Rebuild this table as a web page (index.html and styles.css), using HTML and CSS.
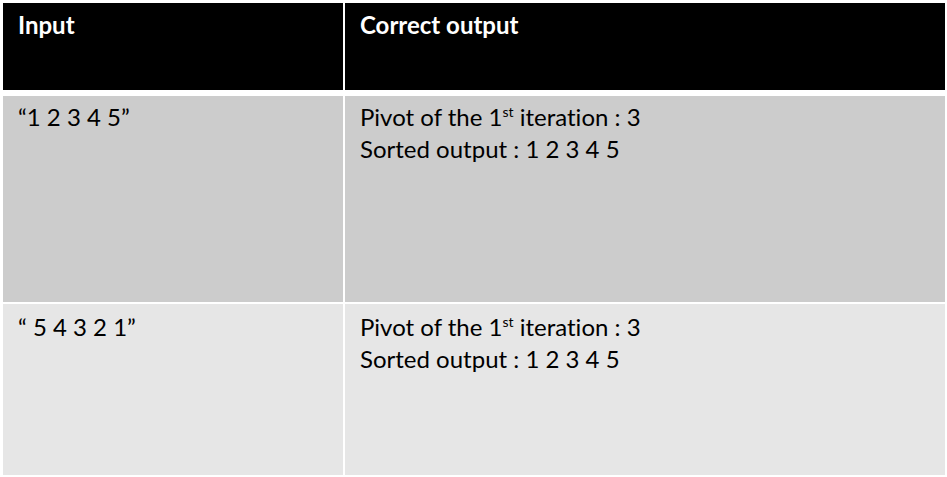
FILE: index.html
```html
<!DOCTYPE html>
<html>
<head>
<meta charset="utf-8">
<link rel="stylesheet" href="styles.css">
</head>
<body>
<div class="table">
  <div class="row head">
    <div class="cell">Input</div>
    <div class="cell">Correct output</div>
  </div>
  <div class="row r1">
    <div class="cell">“1 2 3 4 5”</div>
    <div class="cell">Pivot of the 1<sup>st</sup> iteration : 3<br>Sorted output : 1 2 3 4 5</div>
  </div>
  <div class="row r2">
    <div class="cell">“ 5 4 3 2 1”</div>
    <div class="cell">Pivot of the 1<sup>st</sup> iteration : 3<br>Sorted output : 1 2 3 4 5</div>
  </div>
</div>
</body>
</html>
```
FILE: styles.css
```css
html, body {
  margin: 0;
  padding: 0;
  background: #ffffff;
}
body {
  width: 947px;
  height: 477px;
  overflow: hidden;
}
.table {
  margin: 3px 0 0 3px;
  width: 942px;
  display: flex;
  flex-direction: column;
  gap: 2px;
}
.row {
  display: grid;
  grid-template-columns: 340px 600px;
  column-gap: 2px;
}
.cell {
  padding: 5px 15px 0 15px;
  font-family: Lato, "Open Sans", sans-serif;
  font-size: 24px;
  line-height: 32px;
  color: #000;
  font-variant-ligatures: none;
  font-feature-settings: "liga" 0, "clig" 0;
}
.head {
  margin-bottom: 4px;
}
.head .cell {
  background: #000;
  color: #fff;
  font-weight: bold;
  height: 87px;
  box-sizing: border-box;
  padding-top: 6px;
}
.r1 .cell {
  background: #cccccc;
  height: 206px;
  box-sizing: border-box;
}
.r2 .cell {
  background: #e6e6e6;
  height: 171px;
  box-sizing: border-box;
  padding-top: 7px;
}
sup {
  font-size: 14px;
  line-height: 0;
  vertical-align: 9px;
}
```
